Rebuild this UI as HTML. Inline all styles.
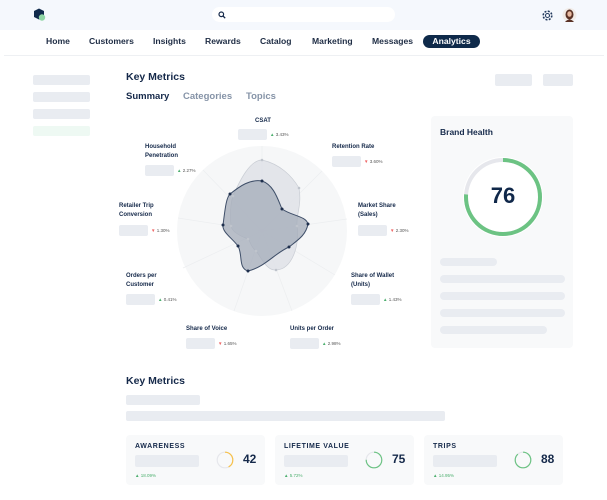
<!DOCTYPE html>
<html><head><meta charset="utf-8"><style>
*{margin:0;padding:0;box-sizing:border-box}
body{width:607px;height:500px;background:#fff;font-family:"Liberation Sans",sans-serif;color:#15294a;position:relative;overflow:hidden}
.a{position:absolute}
.sk{position:absolute;background:#e9ecf1;border-radius:2px}
.b{font-weight:bold}
.nav span{position:absolute;top:36px;font-size:8.6px;font-weight:bold;color:#1e2c44}
.lbl{position:absolute;font-size:6px;font-weight:bold;color:#15294a;line-height:9px}
.pct{position:absolute;font-size:4.5px;color:#555}
.card{position:absolute;background:#f8f9fa;border-radius:4px}
</style></head><body>
<div class="a" style="left:0;top:0;width:607px;height:30px;background:#f5f8fd"></div>
<svg class="a" style="left:33px;top:8px" width="14" height="14"><path d="M6 0.5 L11 3 L11 9 L6 11.5 L1 9 L1 3Z" fill="#102a4c"/><circle cx="9" cy="9.5" r="3.2" fill="#8fd6a5"/></svg>
<div class="a" style="left:212px;top:7px;width:183px;height:15px;background:#fff;border-radius:8px"></div>
<svg class="a" style="left:218px;top:11px" width="8" height="8"><circle cx="3.3" cy="3.3" r="2.3" stroke="#15294a" stroke-width="1.2" fill="none"/><line x1="5" y1="5" x2="7.2" y2="7.2" stroke="#15294a" stroke-width="1.3"/></svg>
<svg class="a" style="left:541px;top:9px" width="13" height="13"><circle cx="6.5" cy="6.5" r="4.3" stroke="#233a5e" stroke-width="1.6" fill="none" stroke-dasharray="2 1.4"/><circle cx="6.5" cy="6.5" r="2" stroke="#233a5e" stroke-width="1.1" fill="none"/></svg>
<svg class="a" style="left:562px;top:7px" width="15" height="16"><circle cx="7.5" cy="8" r="7" fill="#f1ece8"/><ellipse cx="7.5" cy="7.5" rx="4" ry="5" fill="#5a3226"/><ellipse cx="7.5" cy="7" rx="2.2" ry="2.8" fill="#e8b9a0"/><path d="M3 15 Q7.5 10 12 15Z" fill="#5a3226"/></svg>
<div class="a" style="left:4px;top:55px;width:600px;height:1px;background:#eef0f3"></div>
<div class="nav">
<span style="left:46px">Home</span><span style="left:89px">Customers</span><span style="left:153px">Insights</span><span style="left:205px">Rewards</span><span style="left:260px">Catalog</span><span style="left:312px">Marketing</span><span style="left:372px">Messages</span>
</div>
<div class="a b" style="left:423px;top:35px;width:57px;height:13px;background:#0f2a4a;border-radius:7px;color:#fff;font-size:8.6px;text-align:center;line-height:13px">Analytics</div>

<div class="sk" style="left:33px;top:75px;width:57px;height:10px"></div>
<div class="sk" style="left:33px;top:92px;width:57px;height:10px"></div>
<div class="sk" style="left:33px;top:109px;width:57px;height:10px"></div>
<div class="sk" style="left:33px;top:126px;width:57px;height:10px;background:#eef9f3"></div>

<div class="a b" style="left:126px;top:71px;font-size:10.5px">Key Metrics</div>
<div class="a b" style="left:126px;top:91px;font-size:9.5px">Summary</div>
<div class="a b" style="left:183px;top:91px;font-size:9.5px;color:#8593a7">Categories</div>
<div class="a b" style="left:246px;top:91px;font-size:9.5px;color:#8593a7">Topics</div>
<div class="sk" style="left:495px;top:74px;width:37px;height:12px"></div>
<div class="sk" style="left:543px;top:74px;width:30px;height:12px"></div>

<svg class="a" style="left:0;top:0" width="430" height="360">
<circle cx="262" cy="231" r="85" fill="#f6f7f8"/>
<g stroke="#eceef0" stroke-width="0.7">
<line x1="262" y1="231" x2="262" y2="146"/><line x1="262" y1="231" x2="322" y2="171"/><line x1="262" y1="231" x2="347" y2="219"/><line x1="262" y1="231" x2="335" y2="275"/><line x1="262" y1="231" x2="292" y2="311"/><line x1="262" y1="231" x2="234" y2="311"/><line x1="262" y1="231" x2="183" y2="268"/><line x1="262" y1="231" x2="178" y2="218"/><line x1="262" y1="231" x2="203" y2="170"/>
</g>
<path d="M262 160 C280 164 292 176 299 188 C302 205 296 215 297 226 C300 245 292 270 276 270 C266 271 260 255 256 251 C250 246 250 240 248 239 C240 236 232 232 231 226 C230 215 230 205 233 196 C240 180 250 160 262 160Z" fill="#dfe2e7" fill-opacity="0.85" stroke="#c9cdd4" stroke-width="0.7"/>
<path d="M262 181 C274 185 278 200 282 209 C292 216 306 216 308 224 C306 235 298 240 289 247 C275 253 265 267 248 271 C238 268 243 255 238 246 C232 238 222 232 223 225 C225 210 226 198 230 194 C240 186 250 179 262 181Z" fill="#a3abb8" fill-opacity="0.75" stroke="#3e4e68" stroke-width="1"/>
<g fill="#bfc4cc"><circle cx="262" cy="160" r="1.3"/><circle cx="299" cy="188" r="1.3"/><circle cx="297" cy="226" r="1.3"/><circle cx="276" cy="270" r="1.3"/><circle cx="256" cy="251" r="1.3"/><circle cx="248" cy="239" r="1.3"/><circle cx="231" cy="226" r="1.3"/><circle cx="233" cy="196" r="1.3"/></g>
<g fill="#1e2f4d"><circle cx="262" cy="181" r="1.5"/><circle cx="282" cy="209" r="1.5"/><circle cx="308" cy="224" r="1.5"/><circle cx="289" cy="247" r="1.5"/><circle cx="248" cy="271" r="1.5"/><circle cx="238" cy="246" r="1.5"/><circle cx="223" cy="225" r="1.5"/><circle cx="230" cy="194" r="1.5"/></g>
</svg>

<div class="lbl" style="left:255px;top:117px">CSAT</div>
<div class="sk" style="left:238px;top:129px;width:29px;height:11px"></div><div class="pct" style="left:270px;top:132px"><span style="color:#4caf6e">▲</span> 3.43%</div>
<div class="lbl" style="left:145px;top:143px">Household<br>Penetration</div>
<div class="sk" style="left:145px;top:165px;width:29px;height:11px"></div><div class="pct" style="left:177px;top:168px"><span style="color:#4caf6e">▲</span> 2.27%</div>
<div class="lbl" style="left:332px;top:143px">Retention Rate</div>
<div class="sk" style="left:332px;top:156px;width:29px;height:11px"></div><div class="pct" style="left:364px;top:159px"><span style="color:#e66">▼</span> 3.60%</div>
<div class="lbl" style="left:119px;top:202px">Retailer Trip<br>Conversion</div>
<div class="sk" style="left:119px;top:225px;width:29px;height:11px"></div><div class="pct" style="left:151px;top:228px"><span style="color:#e66">▼</span> 1.30%</div>
<div class="lbl" style="left:358px;top:202px">Market Share<br>(Sales)</div>
<div class="sk" style="left:358px;top:225px;width:29px;height:11px"></div><div class="pct" style="left:390px;top:228px"><span style="color:#e66">▼</span> 2.30%</div>
<div class="lbl" style="left:126px;top:272px">Orders per<br>Customer</div>
<div class="sk" style="left:126px;top:294px;width:29px;height:11px"></div><div class="pct" style="left:158px;top:297px"><span style="color:#4caf6e">▲</span> 0.41%</div>
<div class="lbl" style="left:351px;top:272px">Share of Wallet<br>(Units)</div>
<div class="sk" style="left:351px;top:294px;width:29px;height:11px"></div><div class="pct" style="left:383px;top:297px"><span style="color:#4caf6e">▲</span> 1.43%</div>
<div class="lbl" style="left:186px;top:325px">Share of Voice</div>
<div class="sk" style="left:186px;top:338px;width:29px;height:11px"></div><div class="pct" style="left:218px;top:341px"><span style="color:#e66">▼</span> 1.65%</div>
<div class="lbl" style="left:290px;top:325px">Units per Order</div>
<div class="sk" style="left:290px;top:338px;width:29px;height:11px"></div><div class="pct" style="left:322px;top:341px"><span style="color:#4caf6e">▲</span> 2.98%</div>

<div class="card" style="left:431px;top:116px;width:142px;height:232px"></div>
<div class="a b" style="left:440px;top:127px;font-size:8.5px">Brand Health</div>
<svg class="a" style="left:460px;top:155px" width="86" height="86">
<circle cx="43" cy="42" r="40" fill="#fff"/>
<circle cx="43" cy="42" r="37" fill="none" stroke="#e6e7ec" stroke-width="4"/>
<circle cx="43" cy="42" r="37" fill="none" stroke="#6cc383" stroke-width="4" stroke-dasharray="176.7 232.5" transform="rotate(-90 43 42)"/>
</svg>
<div class="a b" style="left:460px;top:183px;width:86px;text-align:center;font-size:22px;color:#10284a">76</div>
<div class="sk" style="left:440px;top:258px;width:57px;height:8px;border-radius:4px"></div>
<div class="sk" style="left:440px;top:275px;width:125px;height:8px;border-radius:4px"></div>
<div class="sk" style="left:440px;top:292px;width:125px;height:8px;border-radius:4px"></div>
<div class="sk" style="left:440px;top:309px;width:125px;height:8px;border-radius:4px"></div>
<div class="sk" style="left:440px;top:326px;width:107px;height:8px;border-radius:4px"></div>

<div class="a b" style="left:126px;top:375px;font-size:10.5px">Key Metrics</div>
<div class="sk" style="left:126px;top:395px;width:74px;height:10px"></div>
<div class="sk" style="left:126px;top:411px;width:319px;height:10px"></div>

<div class="card" style="left:126px;top:435px;width:139px;height:50px"></div>
<div class="card" style="left:275px;top:435px;width:139px;height:50px"></div>
<div class="card" style="left:424px;top:435px;width:139px;height:50px"></div>
<div class="a b" style="left:135px;top:443px;font-size:7px;letter-spacing:0.6px">AWARENESS</div>
<div class="a b" style="left:284px;top:443px;font-size:7px;letter-spacing:0.6px">LIFETIME VALUE</div>
<div class="a b" style="left:433px;top:443px;font-size:7px;letter-spacing:0.6px">TRIPS</div>
<div class="sk" style="left:135px;top:455px;width:64px;height:12px"></div>
<div class="sk" style="left:284px;top:455px;width:64px;height:12px"></div>
<div class="sk" style="left:433px;top:455px;width:64px;height:12px"></div>
<div class="pct" style="left:135px;top:473px;color:#4caf6e">▲ 18.09%</div>
<div class="pct" style="left:284px;top:473px;color:#4caf6e">▲ 5.72%</div>
<div class="pct" style="left:433px;top:473px;color:#4caf6e">▲ 14.95%</div>
<svg class="a" style="left:216px;top:451px" width="18" height="18"><circle cx="9" cy="9" r="7.8" fill="none" stroke="#e6e7ec" stroke-width="1.2"/><circle cx="9" cy="9" r="7.8" fill="none" stroke="#f7c14a" stroke-width="1.2" stroke-dasharray="20.6 49" transform="rotate(-90 9 9)"/></svg>
<svg class="a" style="left:365px;top:451px" width="18" height="18"><circle cx="9" cy="9" r="7.8" fill="none" stroke="#e6e7ec" stroke-width="1.2"/><circle cx="9" cy="9" r="7.8" fill="none" stroke="#6cc383" stroke-width="1.2" stroke-dasharray="36.8 49" transform="rotate(-90 9 9)"/></svg>
<svg class="a" style="left:514px;top:451px" width="18" height="18"><circle cx="9" cy="9" r="7.8" fill="none" stroke="#e6e7ec" stroke-width="1.2"/><circle cx="9" cy="9" r="7.8" fill="none" stroke="#6cc383" stroke-width="1.2" stroke-dasharray="43.1 49" transform="rotate(-90 9 9)"/></svg>
<div class="a b" style="left:243px;top:452px;font-size:12px">42</div>
<div class="a b" style="left:392px;top:452px;font-size:12px">75</div>
<div class="a b" style="left:541px;top:452px;font-size:12px">88</div>
</body></html>
